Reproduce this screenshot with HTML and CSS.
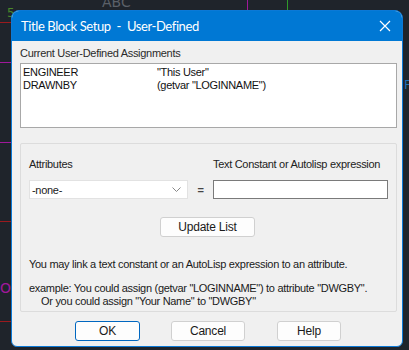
FILE: index.html
```html
<!DOCTYPE html>
<html lang="en">
<head>
    <meta charset="UTF-8">
    <meta name="viewport" content="width=device-width, initial-scale=1.0">
    <title>Title Block Setup</title>
    <link rel="stylesheet" href="styles.css">
</head>
<body>
    <!-- Drawing behind the dialog -->
    <div class="canvas">
        <span class="cad-text abc">ABC</span>
        <span class="cad-text five">5</span>
        <span class="cad-text circle">O</span>
        <span class="cad-text eff">F</span>
        <div class="cad-line vline magenta" style="left: 247px;"></div>
        <div class="cad-line vline green" style="left: 287px;"></div>
        <div class="cad-line hline red" style="top: 22px;"></div>
        <div class="cad-line hline magenta" style="top: 62px;"></div>
        <div class="cad-line hline magenta" style="top: 142px;"></div>
        <div class="cad-line hline red" style="top: 221px;"></div>
        <div class="cad-line hline red" style="top: 321px;"></div>
    </div>

    <div class="dialog">
        <div class="title-bar">
            <span class="title">Title Block Setup&nbsp; -&nbsp; User-Defined</span>
            <svg class="close" width="12" height="12" viewBox="0 0 12 12">
                <path d="M1 1 L11 11 M11 1 L1 11" stroke="#fff" stroke-width="1.2" fill="none"/>
            </svg>
        </div>

        <div class="dialog-body">
            <div class="label">Current User-Defined Assignments</div>
            <div class="list-box">
                <div class="list-row"><span class="col-name">ENGINEER</span><span>"This User"</span></div>
                <div class="list-row"><span class="col-name">DRAWNBY</span><span>(getvar "LOGINNAME")</span></div>
            </div>

            <div class="group-box">
                <div class="field-labels">
                    <span class="attr-label">Attributes</span>
                    <span>Text Constant or Autolisp expression</span>
                </div>
                <div class="field-row">
                    <div class="combo">
                        <span>-none-</span>
                        <svg width="9" height="6" viewBox="0 0 9 6">
                            <path d="M0.5 0.5 L4.5 4.5 L8.5 0.5" stroke="#888" stroke-width="1" fill="none"/>
                        </svg>
                    </div>
                    <span class="equals">=</span>
                    <div class="text-input"></div>
                </div>
                <div class="update-row">
                    <button class="btn update">Update List</button>
                </div>
                <p class="note">You may link a text constant or an AutoLisp expression to an attribute.</p>
                <p class="example">example: You could assign (getvar "LOGINNAME") to attribute "DWGBY".<br><span class="indent">Or you could assign "Your Name" to "DWGBY"</span></p>
            </div>

            <div class="button-row">
                <button class="btn ok">OK</button>
                <button class="btn cancel">Cancel</button>
                <button class="btn help">Help</button>
            </div>
        </div>
    </div>
</body>
</html>
```

FILE: styles.css
```css
/* General Styles */
body {
    margin: 0;
    padding: 0;
    background: #1f242b;
    font-family: 'Liberation Sans', Arial, sans-serif;
    font-size: 11px;
    letter-spacing: -0.3px;
    color: #1a1a1a;
    overflow: hidden;
    height: 350px;
}

/* Drawing in the background */
.canvas {
    position: absolute;
    left: 0;
    top: 0;
    width: 409px;
    height: 350px;
}

.cad-line {
    position: absolute;
}

.vline {
    top: 0;
    width: 1px;
    height: 12px;
}

.hline {
    left: 0;
    width: 14px;
    height: 1px;
}

.magenta { background: #a0189a; }
.green { background: #2f9a2a; }
.red { background: #9a1a1e; }

.cad-text {
    position: absolute;
    font-family: 'DejaVu Sans', sans-serif;
    letter-spacing: 0;
}

.abc {
    left: 102px;
    top: -6px;
    font-size: 14px;
    color: #5b6068;
}

.five {
    left: 7px;
    top: 6px;
    font-size: 12px;
    color: #4a8a2a;
}

.circle {
    left: 0;
    top: 280px;
    font-size: 14px;
    color: #a0189a;
}

.eff {
    left: 404px;
    top: 78px;
    font-size: 12px;
    color: #1f6fb5;
}

/* Dialog */
.dialog {
    position: relative;
    margin: 10px 0 0 11px;
    width: 392px;
    height: 337px;
    box-sizing: border-box;
    border: 1px solid #0b79d6;
    border-radius: 8px 8px 6px 6px;
    background: #f0f0f0;
    overflow: hidden;
    display: flex;
    flex-direction: column;
}

.title-bar {
    height: 30px;
    background: #0078d4;
    display: flex;
    align-items: center;
    justify-content: space-between;
    padding: 0 11px 0 9px;
    flex-shrink: 0;
}

.title {
    font-family: Lato, 'Noto Sans', sans-serif;
    font-size: 13px;
    letter-spacing: -0.4px;
    color: #fff;
}

.close {
    display: block;
}

.dialog-body {
    flex: 1;
    padding: 5px 5px 0 8px;
    display: flex;
    flex-direction: column;
}

.label {
    line-height: 14px;
    color: #2a2a2a;
}

.list-box {
    margin-top: 3px;
    height: 65px;
    box-sizing: border-box;
    background: #fff;
    border: 1px solid #a8a8a8;
    padding: 2px 2px;
}

.list-row {
    display: flex;
    line-height: 13px;
    color: #111;
}

.col-name {
    width: 134px;
}

/* Group box */
.group-box {
    margin-top: 15px;
    height: 169px;
    box-sizing: border-box;
    border: 1px solid #dcdcdc;
    border-radius: 2px;
    padding: 13px 8px 0 8px;
}

.field-labels {
    display: flex;
    line-height: 14px;
    color: #222;
}

.attr-label {
    width: 184px;
}

.field-row {
    display: flex;
    align-items: center;
    margin-top: 9px;
}

.combo {
    width: 159px;
    height: 19px;
    box-sizing: border-box;
    background: #fff;
    border: 1px solid #e2e2e2;
    display: flex;
    align-items: center;
    justify-content: space-between;
    padding: 0 6px 0 2px;
}

.equals {
    width: 25px;
    text-align: center;
    font-weight: bold;
    color: #444;
}

.text-input {
    width: 175px;
    height: 19px;
    box-sizing: border-box;
    background: #fff;
    border: 1px solid #7a7a7a;
}

.update-row {
    display: flex;
    margin-top: 18px;
    padding-left: 131px;
}

.btn {
    font-family: 'Liberation Sans', Arial, sans-serif;
    font-size: 12px;
    letter-spacing: -0.2px;
    color: #1a1a1a;
    background: #fdfdfd;
    border: 1px solid #d0d0d0;
    border-radius: 3px;
    height: 20px;
    padding: 0;
}

.update {
    width: 95px;
}

.note {
    margin: 20px 0 0 0;
    line-height: 14px;
}

.example {
    margin: 11px 0 0 0;
    line-height: 13px;
}

.indent {
    padding-left: 12px;
}

/* Bottom buttons */
.button-row {
    display: flex;
    margin-top: 9px;
    padding-left: 55px;
    gap: 31px;
}

.ok {
    width: 65px;
    border: 1px solid #0067c0;
}

.cancel {
    width: 74px;
}

.help {
    width: 64px;
    margin-left: 1px;
}
```
